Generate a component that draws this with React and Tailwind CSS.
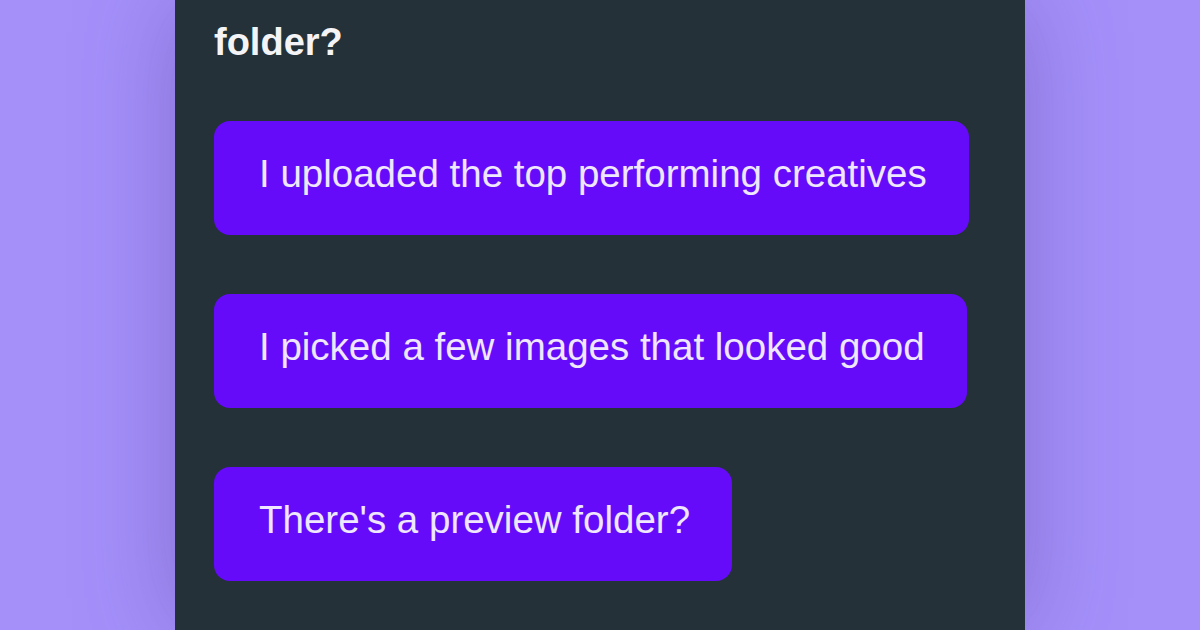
import React from "react";

const answers = [
    "I uploaded the top performing creatives",
    "I picked a few images that looked good",
    "There's a preview folder?",
];

export default function App() {
    return (
        <div className="h-[630px] w-[1200px] overflow-hidden bg-[#a590fa] flex justify-center font-['Liberation_Sans',Arial,sans-serif]">
            <div className="w-[850px] h-full bg-[#243139] px-[39px] pt-[23px] shadow-[0_0_90px_rgba(70,50,140,0.35)]">
                {/* Question tail */}
                <h2 className="text-[38px] leading-[38px] font-bold text-[#f4f4f6]">folder?</h2>

                {/* Answer options */}
                <div className="mt-[60px] flex flex-col items-start gap-[59px]">
                    {answers.map((a) => (
                        <button
                            key={a}
                            className="h-[114px] pl-[45px] pr-[42px] pb-[8px] rounded-[16px] bg-[#650bfa] text-[38.5px] leading-none text-[#efe6ff] text-left"
                        >
                            {a}
                        </button>
                    ))}
                </div>
            </div>
        </div>
    );
}
